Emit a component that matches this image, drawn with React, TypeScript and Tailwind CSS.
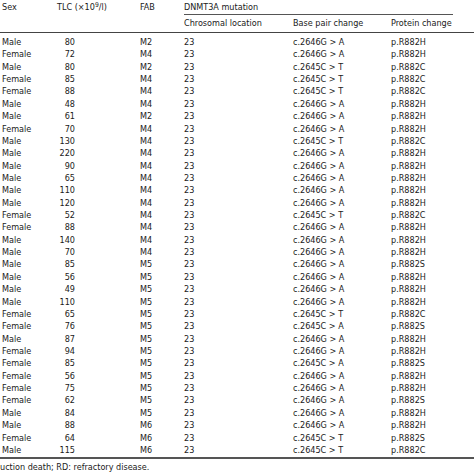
const rows: [string, string, string, string, string, string][] = [
  ["Male", "80", "M2", "23", "c.2646G > A", "p.R882H"],
  ["Female", "72", "M4", "23", "c.2646G > A", "p.R882H"],
  ["Male", "80", "M2", "23", "c.2645C > T", "p.R882C"],
  ["Female", "85", "M4", "23", "c.2645C > T", "p.R882C"],
  ["Female", "88", "M4", "23", "c.2645C > T", "p.R882C"],
  ["Male", "48", "M4", "23", "c.2646G > A", "p.R882H"],
  ["Male", "61", "M2", "23", "c.2646G > A", "p.R882H"],
  ["Female", "70", "M4", "23", "c.2646G > A", "p.R882H"],
  ["Male", "130", "M4", "23", "c.2645C > T", "p.R882C"],
  ["Male", "220", "M4", "23", "c.2646G > A", "p.R882H"],
  ["Male", "90", "M4", "23", "c.2646G > A", "p.R882H"],
  ["Male", "65", "M4", "23", "c.2646G > A", "p.R882H"],
  ["Male", "110", "M4", "23", "c.2646G > A", "p.R882H"],
  ["Male", "120", "M4", "23", "c.2646G > A", "p.R882H"],
  ["Female", "52", "M4", "23", "c.2645C > T", "p.R882C"],
  ["Female", "88", "M4", "23", "c.2646G > A", "p.R882H"],
  ["Male", "140", "M4", "23", "c.2646G > A", "p.R882H"],
  ["Male", "70", "M4", "23", "c.2646G > A", "p.R882H"],
  ["Male", "85", "M5", "23", "c.2646G > A", "p.R882S"],
  ["Male", "56", "M5", "23", "c.2646G > A", "p.R882H"],
  ["Male", "49", "M5", "23", "c.2646G > A", "p.R882H"],
  ["Male", "110", "M5", "23", "c.2646G > A", "p.R882H"],
  ["Female", "65", "M5", "23", "c.2645C > T", "p.R882C"],
  ["Female", "76", "M5", "23", "c.2645C > A", "p.R882S"],
  ["Male", "87", "M5", "23", "c.2646G > A", "p.R882H"],
  ["Female", "94", "M5", "23", "c.2646G > A", "p.R882H"],
  ["Female", "85", "M5", "23", "c.2645C > A", "p.R882S"],
  ["Female", "56", "M5", "23", "c.2646G > A", "p.R882H"],
  ["Female", "75", "M5", "23", "c.2646G > A", "p.R882H"],
  ["Female", "62", "M5", "23", "c.2646G > A", "p.R882S"],
  ["Male", "84", "M5", "23", "c.2646G > A", "p.R882H"],
  ["Male", "88", "M6", "23", "c.2646G > A", "p.R882H"],
  ["Female", "64", "M6", "23", "c.2645C > T", "p.R882S"],
  ["Male", "115", "M6", "23", "c.2645C > T", "p.R882C"],
];

export default function App() {
  return (
    <div className="h-[474px] w-[474px] overflow-hidden bg-white font-['DejaVu_Sans_Condensed','DejaVu_Sans',sans-serif] text-[9px] text-[#1a1a1a]">
      {/* header */}
      <div className="grid grid-cols-[55px_83px_44px_1fr] border-b-[1.5px] border-[#444] pl-[2px]">
        <div className="pt-[1px] leading-[12px]">Sex</div>
        <div className="pt-[1px] leading-[12px]">
          TLC (×10<sup>9</sup>/l)
        </div>
        <div className="pt-[1px] leading-[12px]">FAB</div>
        <div>
          <div className="mr-[21px] h-[15px] border-b border-[#555] pt-[1px] leading-[12px]">
            DNMT3A mutation
          </div>
          <div className="grid h-[17px] grid-cols-[109px_98px_1fr] items-center">
            <div>Chrosomal location</div>
            <div>Base pair change</div>
            <div>Protein change</div>
          </div>
        </div>
      </div>

      {/* body */}
      <div className="border-b-2 border-[#555] pt-[3px] pb-[1px]">
        {rows.map((r, i) => (
          <div
            key={i}
            className="grid h-[12.37px] grid-cols-[55px_83px_44px_109px_98px_1fr] pl-[2px] leading-[12.37px]"
          >
            <div>{r[0]}</div>
            <div className="pr-[65px] text-right">{r[1]}</div>
            <div>{r[2]}</div>
            <div>{r[3]}</div>
            <div>{r[4]}</div>
            <div>{r[5]}</div>
          </div>
        ))}
      </div>

      <div className="mt-[2px] whitespace-nowrap leading-[12px]">
        uction death; RD: refractory disease.
      </div>
    </div>
  );
}
